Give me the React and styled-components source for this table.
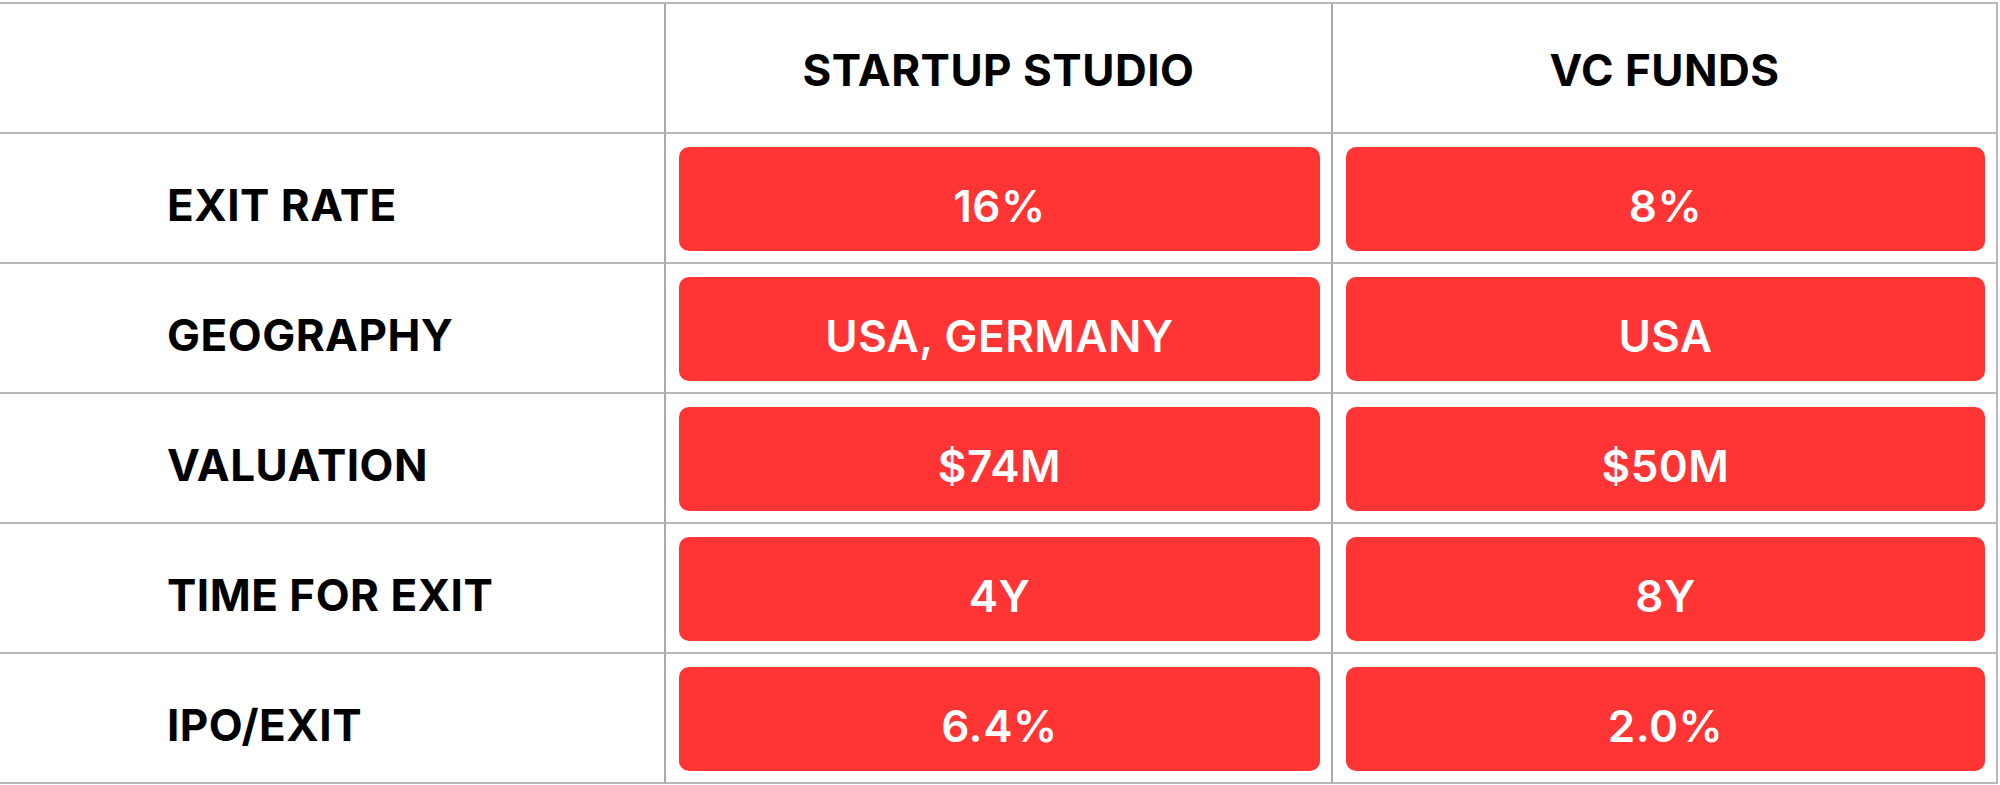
import React from 'react';
import styled, { createGlobalStyle } from 'styled-components';

const GlobalStyle = createGlobalStyle`
  html, body {
    margin: 0;
    padding: 0;
    background: #ffffff;
  }
  body {
    font-family: Inter, "Liberation Sans", Arial, sans-serif;
  }
`;

const Table = styled.div`
  margin-top: 2px;
  width: 1998px;
  box-sizing: border-box;
  display: grid;
  grid-template-columns: 664px 667px 1fr;
  border-top: 2px solid #b9b9b9;
  border-right: 2px solid #b9b9b9;
`;

const Cell = styled.div`
  height: 130px;
  box-sizing: border-box;
  border-bottom: 2px solid #b9b9b9;
  border-left: ${p => (p.$first ? 'none' : '2px solid #a9a9a9')};
  display: flex;
  align-items: center;
  justify-content: ${p => (p.$first ? 'flex-start' : 'center')};
  padding: ${p => (p.$first ? '0 0 0 167px' : '0')};
`;

const HeadText = styled.span`
  font-size: 44px;
  font-weight: 700;
  color: #000;
  letter-spacing: 0.5px;
  padding-top: 4px;
`;

const LabelText = styled(HeadText)`
  padding-top: 14px;
`;

const ValueCell = styled(Cell)`
  padding: 13px 11px 11px 13px;
  align-items: stretch;
`;

const Pill = styled.div`
  flex: 1;
  background: #ff3535;
  border-radius: 10px;
  display: flex;
  align-items: center;
  justify-content: center;
  color: #ffffff;
  font-size: 44px;
  font-weight: 600;
  letter-spacing: 0.5px;
  padding-top: 14px;
  box-sizing: border-box;
`;

const rows = [
  ['EXIT RATE', '16%', '8%'],
  ['GEOGRAPHY', 'USA, GERMANY', 'USA'],
  ['VALUATION', '$74M', '$50M'],
  ['TIME FOR EXIT', '4Y', '8Y'],
  ['IPO/EXIT', '6.4%', '2.0%'],
];

const App = () => {
  return (
    <>
      <GlobalStyle />
      <Table>
        <Cell $first />
        <Cell><HeadText>STARTUP STUDIO</HeadText></Cell>
        <Cell><HeadText>VC FUNDS</HeadText></Cell>
        {rows.map(([label, studio, vc]) => (
          <React.Fragment key={label}>
            <Cell $first><LabelText>{label}</LabelText></Cell>
            <ValueCell><Pill>{studio}</Pill></ValueCell>
            <ValueCell><Pill>{vc}</Pill></ValueCell>
          </React.Fragment>
        ))}
      </Table>
    </>
  );
};

export default App;
